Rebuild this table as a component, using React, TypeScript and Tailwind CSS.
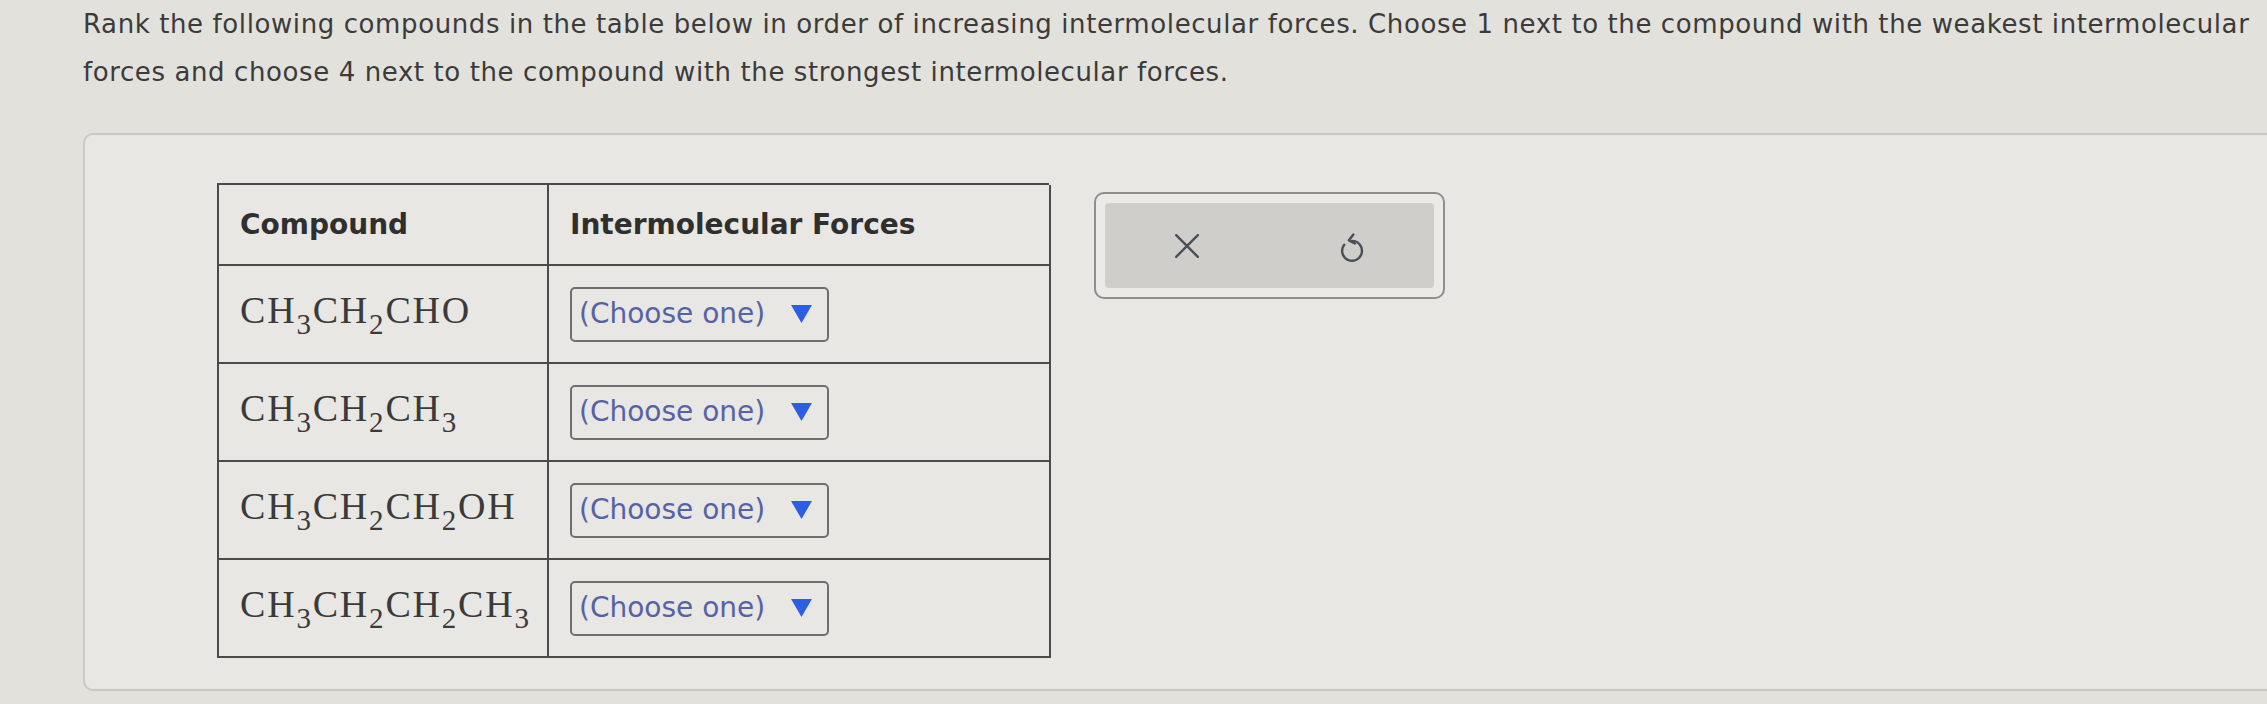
import React from "react";

const ROWS: { parts: [string, string][] }[] = [
  { parts: [["CH", "3"], ["CH", "2"], ["CHO", ""]] },
  { parts: [["CH", "3"], ["CH", "2"], ["CH", "3"]] },
  { parts: [["CH", "3"], ["CH", "2"], ["CH", "2"], ["OH", ""]] },
  { parts: [["CH", "3"], ["CH", "2"], ["CH", "2"], ["CH", "3"]] },
];

function Formula({ parts }: { parts: [string, string][] }) {
  return (
    <span className="-mt-[8px] font-['Liberation_Serif',serif] text-[38px] leading-none tracking-[1.8px] text-[#3a3a3a]">
      {parts.map(([atoms, n], i) => (
        <React.Fragment key={i}>
          {atoms}
          {n && <sub className="relative bottom-[-11px] text-[29px] leading-none">{n}</sub>}
        </React.Fragment>
      ))}
    </span>
  );
}

function ChooseOne() {
  return (
    <div className="flex h-[55px] w-[259px] items-center justify-between rounded-[5px] border-2 border-[#6e6e6e] pl-[7px] pr-[14px]">
      <span className="font-['DejaVu_Sans',sans-serif] text-[28px] leading-none text-[#5563a6]">(Choose one)</span>
      <svg width="23" height="20" viewBox="0 0 22 19">
        <path d="M1 1 H21 L11 18 Z" fill="#2c5de3" />
      </svg>
    </div>
  );
}

export default function App() {
  return (
    <div className="relative h-[704px] w-[2267px] overflow-hidden bg-[#e3e1dc] font-['DejaVu_Sans',sans-serif]">
      <p className="pl-[83px] text-[26px] leading-[48px] tracking-[0.6px] text-[#3b3b3b]">
        Rank the following compounds in the table below in order of increasing intermolecular forces. Choose 1 next to the compound with the weakest intermolecular
        <br />
        forces and choose 4 next to the compound with the strongest intermolecular forces.
      </p>

      <div className="ml-[83px] mt-[37px] h-[558px] w-[2300px] rounded-l-[10px] border-2 border-[#cbc9c5] bg-[#e8e7e3] pl-[132px] pt-[48px]">
        <div className="flex items-start">
          {/* table */}
          <div className="grid w-[832px] grid-cols-[330px_502px] border-l-2 border-t-2 border-[#4a4a4a]">
            <div className="flex h-[81px] items-center border-b-2 border-r-2 border-[#4a4a4a] pl-[21px] text-[28px] font-bold text-[#2f2f2f]">
              Compound
            </div>
            <div className="flex h-[81px] items-center border-b-2 border-r-2 border-[#4a4a4a] pl-[21px] text-[28px] font-bold text-[#2f2f2f]">
              Intermolecular Forces
            </div>
            {ROWS.map((row, i) => (
              <React.Fragment key={i}>
                <div className="flex h-[98px] items-center border-b-2 border-r-2 border-[#4a4a4a] pl-[21px]">
                  <Formula parts={row.parts} />
                </div>
                <div className="flex h-[98px] items-center border-b-2 border-r-2 border-[#4a4a4a] pl-[21px]">
                  <ChooseOne />
                </div>
              </React.Fragment>
            ))}
          </div>

          {/* controls */}
          <div className="ml-[45px] mt-[9px] h-[107px] w-[351px] rounded-[10px] border-2 border-[#8e8e8e] bg-[#ebeae6] p-[9px]">
            <div className="flex h-full rounded-[4px] bg-[#cfcecb]">
              <div className="flex flex-1 items-center justify-center">
                <svg width="26" height="26" viewBox="0 0 24 24" fill="none" stroke="#4a4f56" strokeWidth="2.2" strokeLinecap="round">
                  <path d="M2 2 L22 22 M22 2 L2 22" />
                </svg>
              </div>
              <div className="flex flex-1 items-center justify-center pt-[4px]">
                <svg width="34" height="34" viewBox="0 0 24 24" fill="none" stroke="#4a4f56" strokeWidth="1.7" strokeLinecap="round" strokeLinejoin="round">
                  <path d="M12 7 A7 7 0 1 1 6.5 9.7" />
                  <path d="M13 2.5 L9.8 6.6 L14 8.8" />
                </svg>
              </div>
            </div>
          </div>
        </div>
      </div>
    </div>
  );
}
